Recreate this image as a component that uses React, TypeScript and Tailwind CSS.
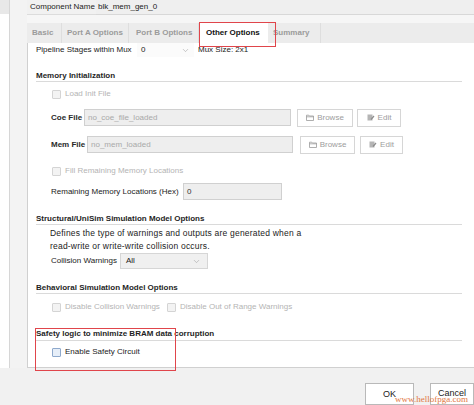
import { ChevronDown } from 'lucide-react'

function FolderIcon() {
  return (
    <svg width="8" height="7" viewBox="0 0 8 7" className="shrink-0">
      <path d="M0.5 1.2h2.3l0.7 0.8h4v4.5h-7z" fill="none" stroke="#9a9a9a" strokeWidth="0.8" />
      <path d="M0.5 2.8h7" stroke="#9a9a9a" strokeWidth="0.8" />
    </svg>
  )
}

function EditIcon() {
  return (
    <svg width="8" height="7" viewBox="0 0 8 7" className="shrink-0">
      <rect x="0.5" y="0.5" width="5" height="6" fill="#b5b5b5" />
      <path d="M4 5.5l3-3.5" stroke="#8c8c8c" strokeWidth="1.2" />
    </svg>
  )
}

function Check({ label, disabled = true }: { label: string; disabled?: boolean }) {
  return (
    <div className="flex items-center gap-[4px] h-[10px]">
      <span
        className={
          disabled
            ? 'w-[9px] h-[9px] border border-[#d4d4d4] bg-[#f3f3f3] rounded-[1px]'
            : 'w-[9px] h-[9px] border border-[#8ea9cc] bg-[#e6eef8] rounded-[1px]'
        }
      />
      <span className={disabled ? 'text-[#b4b4b4]' : 'text-[#222]'}>{label}</span>
    </div>
  )
}

function Heading({ title, tall = false }: { title: string; tall?: boolean }) {
  return (
    <div
      className={
        tall
          ? 'h-[12px] border-b border-[#dadada] font-bold text-[#1f1f1f] leading-[10px]'
          : 'h-[11px] border-b border-[#dadada] font-bold text-[#1f1f1f] leading-[10px]'
      }
    >
      {title}
    </div>
  )
}

function FileRow({ label, value, labelW, inputW, gap1, gap2, browseW, editW }: { label: string; value: string; labelW: string; inputW: string; gap1: string; gap2: string; browseW: string; editW: string }) {
  return (
    <div className="flex items-center h-[17px] ml-[15px]">
      <span className={labelW + ' font-bold text-[#2a2a2a]'}>{label}</span>
      <div className={inputW + ' h-[17px] bg-[#eeeeee] border border-[#d0d0d0] flex items-center px-[3px] text-[#a9a9a9]'}>
        {value}
      </div>
      <div className={gap1} />
      <div className={browseW + ' h-[18px] bg-white border border-[#d6d6d6] flex items-center justify-center gap-[3px] text-[#9d9d9d]'}>
        <FolderIcon />
        Browse
      </div>
      <div className={gap2} />
      <div className={editW + ' h-[18px] bg-white border border-[#d6d6d6] flex items-center justify-center gap-[3px] text-[#9d9d9d]'}>
        <EditIcon />
        Edit
      </div>
    </div>
  )
}

export default function App() {
  return (
    <div className="relative w-[474px] h-[405px] overflow-hidden bg-[#f1f1f1] flex flex-col font-['Liberation_Sans',Arial,sans-serif] text-[8px] text-[#222]">
      <div className="flex h-[370px]">
        <div className="w-[10px] flex flex-col border-r border-[#d6d6d6]">
          <div className="h-[14px] bg-[#e8e8e8]" />
          <div className="flex-1 bg-white" />
        </div>
        <div className="w-[17px] bg-[#f3f3f3]" />
        <div className="flex-1 flex flex-col min-w-0">
          <div className="h-[23px] flex items-start bg-[#f6f6f6]">
            <div className="h-[15px] w-[69px] pl-[3px] flex items-center bg-[#f1f1f1] border-b border-[#dcdcdc] text-[#222]">
              Component Name
            </div>
            <div className="h-[15px] flex-1 bg-[#efefef] border-b border-[#d8d8d8] flex items-center pl-[2px] text-[#222]">
              blk_mem_gen_0
            </div>
          </div>

          <div className="h-[20px] bg-[#ececec] flex items-stretch font-bold text-[#9b9b9b]">
            <div className="w-[35px] pl-[5px] flex items-center border-r border-[#dedede]">Basic</div>
            <div className="w-[67px] pl-[5px] flex items-center border-r border-[#dedede]">Port A Options</div>
            <div className="w-[70px] pl-[7px] flex items-center border-r border-[#dedede]">Port B Options</div>
            <div className="w-[69px] pl-[7px] flex items-center bg-white text-[#111]">Other Options</div>
            <div className="w-[53px] pl-[5px] flex items-center border-r border-[#dedede]">Summary</div>
            <div className="flex-1" />
          </div>

          <div className="flex-1 bg-white border-l border-b border-[#d0d0d0] pl-[8px] pr-[12px] flex flex-col">
            <div className="flex items-center h-[14px]">
              <span className="w-[101px] text-[#222]">Pipeline Stages within Mux</span>
              <div className="w-[57px] h-[14px] bg-[#fbfbfb] flex items-center justify-between pl-[4px] pr-[4px]">
                <span>0</span>
                <ChevronDown size={9} strokeWidth={1.5} color="#a0a0a0" />
              </div>
              <span className="ml-[4px] text-[#222]">Mux Size: 2x1</span>
            </div>

            <div className="mt-[14px]">
              <Heading title="Memory Initialization" />
            </div>
            <div className="mt-[7px] ml-[16px]">
              <Check label="Load Init File" />
            </div>
            <div className="mt-[10px]">
              <FileRow label="Coe File" value="no_coe_file_loaded" labelW="w-[33px]" inputW="w-[207px]" gap1="w-[6px]" gap2="w-[4px]" browseW="w-[56px]" editW="w-[44px]" />
            </div>
            <div className="mt-[10px]">
              <FileRow label="Mem File" value="no_mem_loaded" labelW="w-[36px]" inputW="w-[206px]" gap1="w-[7px]" gap2="w-[5px]" browseW="w-[55px]" editW="w-[43px]" />
            </div>
            <div className="mt-[13px] ml-[16px]">
              <Check label="Fill Remaining Memory Locations" />
            </div>
            <div className="mt-[7px] ml-[15px] flex items-center h-[17px]">
              <span className="w-[132px] text-[#222]">Remaining Memory Locations (Hex)</span>
              <div className="w-[99px] h-[17px] bg-[#eeeeee] border border-[#d0d0d0] flex items-center px-[3px] text-[#333]">0</div>
            </div>

            <div className="mt-[14px]">
              <Heading title="Structural/UniSim Simulation Model Options" />
            </div>
            <div className="mt-[2px] ml-[14px] text-[8.5px] tracking-[0.2px] leading-[13px] text-[#222]">
              <div>Defines the type of warnings and outputs are generated when a</div>
              <div>read-write or write-write collision occurs.</div>
            </div>
            <div className="ml-[15px] flex items-center h-[16px]">
              <span className="w-[69px] text-[#222]">Collision Warnings</span>
              <div className="w-[88px] h-[16px] bg-[#f0f0f0] border border-[#d6d6d6] flex items-center justify-between pl-[5px] pr-[6px]">
                <span>All</span>
                <ChevronDown size={9} strokeWidth={1.5} color="#a0a0a0" />
              </div>
            </div>

            <div className="mt-[14px]">
              <Heading title="Behavioral Simulation Model Options" />
            </div>
            <div className="mt-[8px] ml-[16px] flex items-center">
              <div className="w-[115px]">
                <Check label="Disable Collision Warnings" />
              </div>
              <Check label="Disable Out of Range Warnings" />
            </div>

            <div className="mt-[17px]">
              <Heading title="Safety logic to minimize BRAM data corruption" tall />
            </div>
            <div className="mt-[6px] ml-[16px]">
              <Check label="Enable Safety Circuit" disabled={false} />
            </div>
          </div>
        </div>
      </div>

      <div className="flex-1 flex justify-end items-start pt-[15px] text-[9px]">
        <div className="w-[49px] h-[22px] bg-white border border-[#b9b9b9] flex items-start pt-[4px] justify-center text-[#222]">OK</div>
        <div className="w-[16px]" />
        <div className="w-[44px] h-[22px] bg-white border border-[#b9b9b9] flex items-start pt-[3px] justify-center text-[#222]">Cancel</div>
      </div>

      <div className="absolute left-[199px] top-[22px] w-[77px] h-[25px] border-[1.5px] border-[#e0454b]" />
      <div className="absolute left-[35px] top-[328px] w-[141px] h-[43px] border-[1.5px] border-[#e0454b]" />
      <div className="absolute left-[395px] top-[394px] font-['Liberation_Serif',serif] text-[9px] leading-[10px] text-[#e2783f]">
        www.hellofpga.com
      </div>
    </div>
  )
}
